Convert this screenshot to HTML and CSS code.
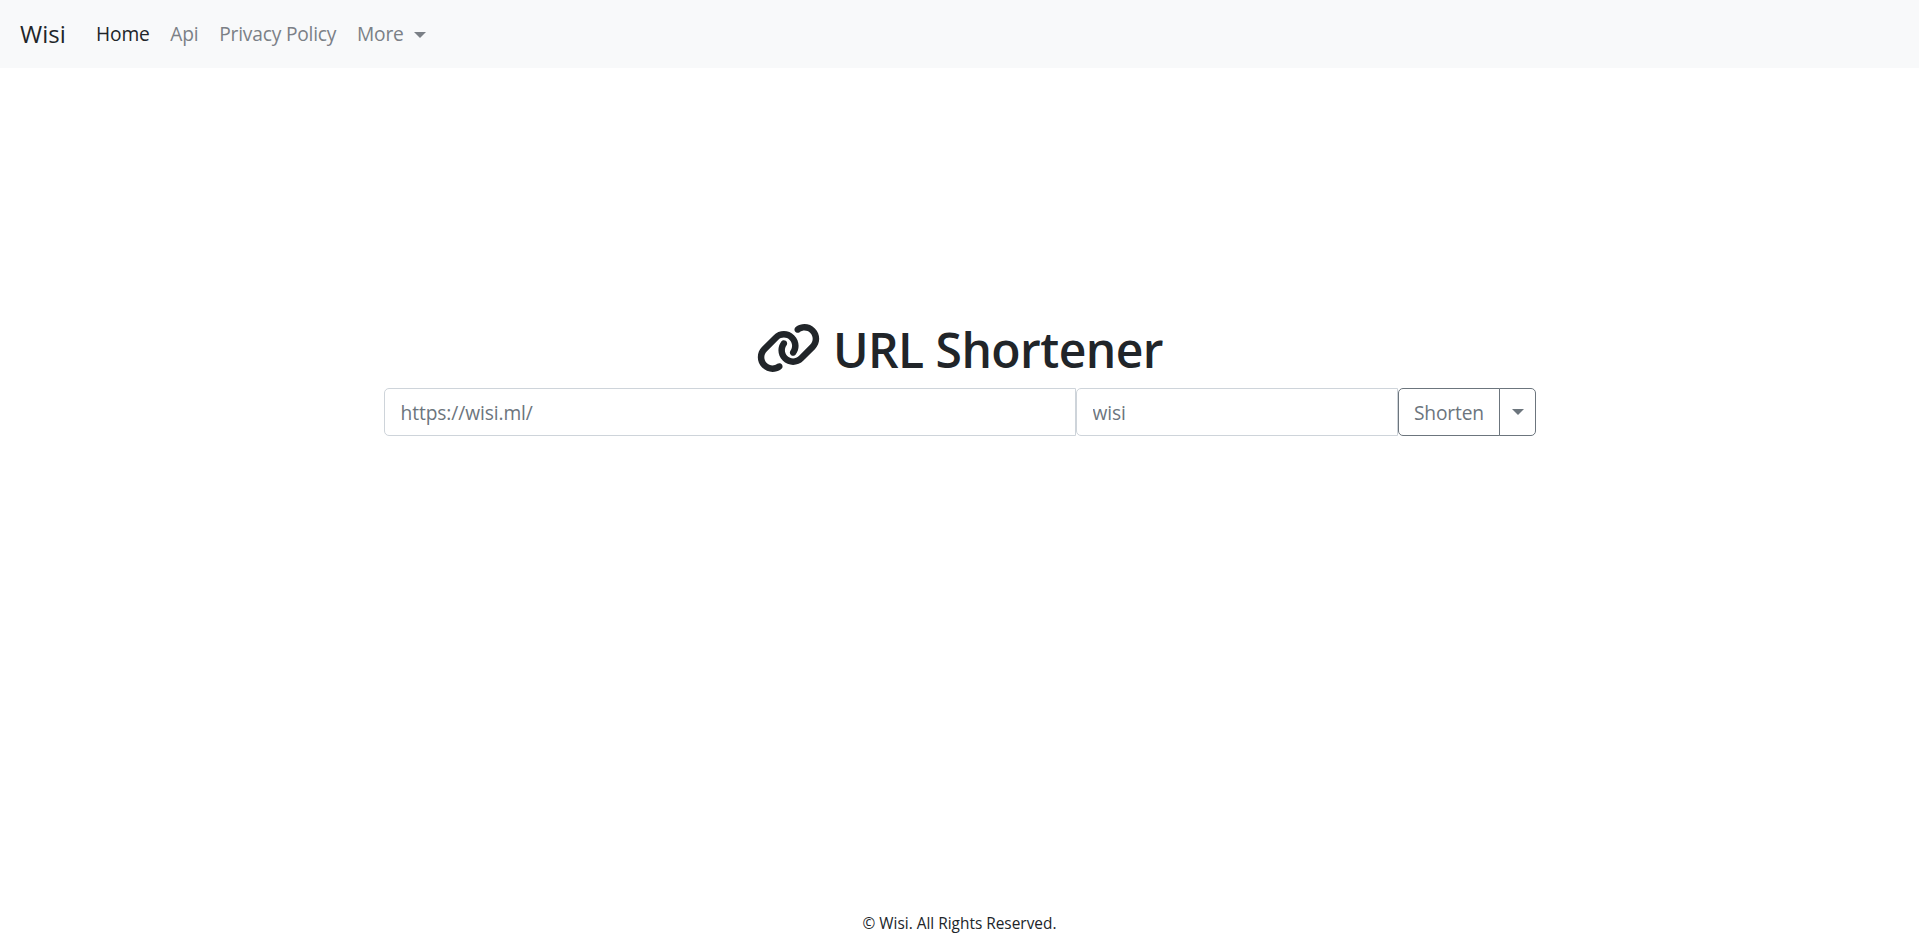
FILE: index.html
```html
<!DOCTYPE html>
<html lang="en">
<head>
<meta charset="utf-8">
<title>Wisi</title>
<link rel="stylesheet" href="styles.css">
</head>
<body>
<nav class="navbar">
  <a class="brand" href="#">Wisi</a>
  <ul class="nav">
    <li><a class="nav-link active" href="#">Home</a></li>
    <li><a class="nav-link" href="#">Api</a></li>
    <li><a class="nav-link" href="#">Privacy Policy</a></li>
    <li><a class="nav-link" href="#">More<span class="caret caret-nav"></span></a></li>
  </ul>
</nav>
<main class="main">
  <h1 class="title"><svg class="link-icon" viewBox="0 0 640 512" aria-hidden="true"><path d="M579.8 267.7c56.5-56.5 56.5-148 0-204.5c-50-50-128.8-56.5-186.3-15.4l-1.6 1.1c-14.4 10.3-17.7 30.3-7.4 44.6s30.3 17.7 44.6 7.4l1.6-1.1c32.1-22.9 76-19.3 103.8 8.6c31.5 31.5 31.5 82.5 0 114L422.3 334.8c-31.5 31.5-82.5 31.5-114 0c-27.9-27.9-31.5-71.8-8.6-103.8l1.1-1.6c10.3-14.4 6.9-34.4-7.4-44.6s-34.4-6.9-44.6 7.4l-1.1 1.6C206.5 251.2 213 330 263 380c56.5 56.5 148 56.5 204.5 0L579.8 267.7zM60.2 244.3c-56.5 56.5-56.5 148 0 204.5c50 50 128.8 56.5 186.3 15.4l1.6-1.1c14.4-10.3 17.7-30.3 7.4-44.6s-30.3-17.7-44.6-7.4l-1.6 1.1c-32.1 22.9-76 19.3-103.8-8.6C74 372 74 321 105.5 289.5L217.7 177.2c31.5-31.5 82.5-31.5 114 0c27.9 27.9 31.5 71.8 8.6 103.9l-1.1 1.6c-10.3 14.4-6.9 34.4 7.4 44.6s34.4 6.9 44.6-7.4l1.1-1.6C433.5 260.8 427 182 377 132c-56.5-56.5-148-56.5-204.5 0L60.2 244.3z"/></svg> URL Shortener</h1>
  <form class="group">
    <input class="field field-url" type="text" placeholder="https://wisi.ml/">
    <input class="field field-alias" type="text" placeholder="wisi">
    <button class="btn btn-main" type="button">Shorten</button>
    <button class="btn btn-drop" type="button"><span class="caret"></span></button>
  </form>
</main>
<footer class="footer">© Wisi. All Rights Reserved.</footer>
</body>
</html>
```
FILE: styles.css
```css
* { box-sizing: border-box; }
html, body { height: 100%; }
body {
  margin: 0;
  display: flex;
  flex-direction: column;
  min-height: 100vh;
  background: #fff;
  color: #212529;
  font-family: "Open Sans", "Noto Sans", sans-serif;
}
a { text-decoration: none; }
.navbar {
  height: 68px;
  flex: none;
  background: #f8f9fa;
  display: flex;
  align-items: center;
  padding: 0 20px 2px;
}
.brand { font-size: 24px; color: #212529; margin-right: 20px; }
.nav { display: flex; list-style: none; margin: 0; padding: 0; }
.nav-link { display: block; padding: 0 10.4px; font-size: 19.2px; color: #7b8086; letter-spacing: -0.2px; }
.nav-link.active { color: #212529; }
.caret {
  display: block;
  width: 0;
  height: 0;
  border-top: 6px solid currentColor;
  border-left: 6px solid transparent;
  border-right: 6px solid transparent;
}
.caret-nav { display: inline-block; margin-left: 10px; vertical-align: 3px; }
.main { flex: 1; padding-top: 250px; display: flex; flex-direction: column; align-items: center; }
.title {
  margin: 0 0 6px;
  font-size: 48px;
  line-height: 64px;
  font-weight: 600;
  letter-spacing: -0.55px;
  text-align: center;
}
.link-icon { width: 65px; height: 52px; fill: currentColor; vertical-align: -6px; }
.group { display: flex; width: 1152px; height: 48px; }
.field {
  height: 48px;
  padding: 1px 15px 0 16px;
  font: inherit;
  font-size: 19.2px;
  letter-spacing: -0.1px;
  background: #fff;
  border: 1px solid #ced4da;
  outline: none;
}
.field::placeholder { color: #6c757d; opacity: 1; }
.field-url { width: 692px; border-radius: 5px 0 0 5px; }
.field-alias { width: 322px; border-radius: 5px 0 0 5px; }
.btn {
  height: 48px;
  background: #fff;
  color: #6c757d;
  border: 1px solid #6c757d;
  font: inherit;
  font-size: 19.2px;
  letter-spacing: -0.15px;
  padding: 1px 0 0 1px;
}
.btn-main { width: 102px; border-radius: 5px 0 0 5px; }
.btn-drop { width: 37px; margin-left: -1px; padding: 0 0 0 12px; border-radius: 0 5px 5px 0; }
.footer { flex: none; height: 30px; line-height: 32px; font-size: 15.4px; text-align: center; }
```
